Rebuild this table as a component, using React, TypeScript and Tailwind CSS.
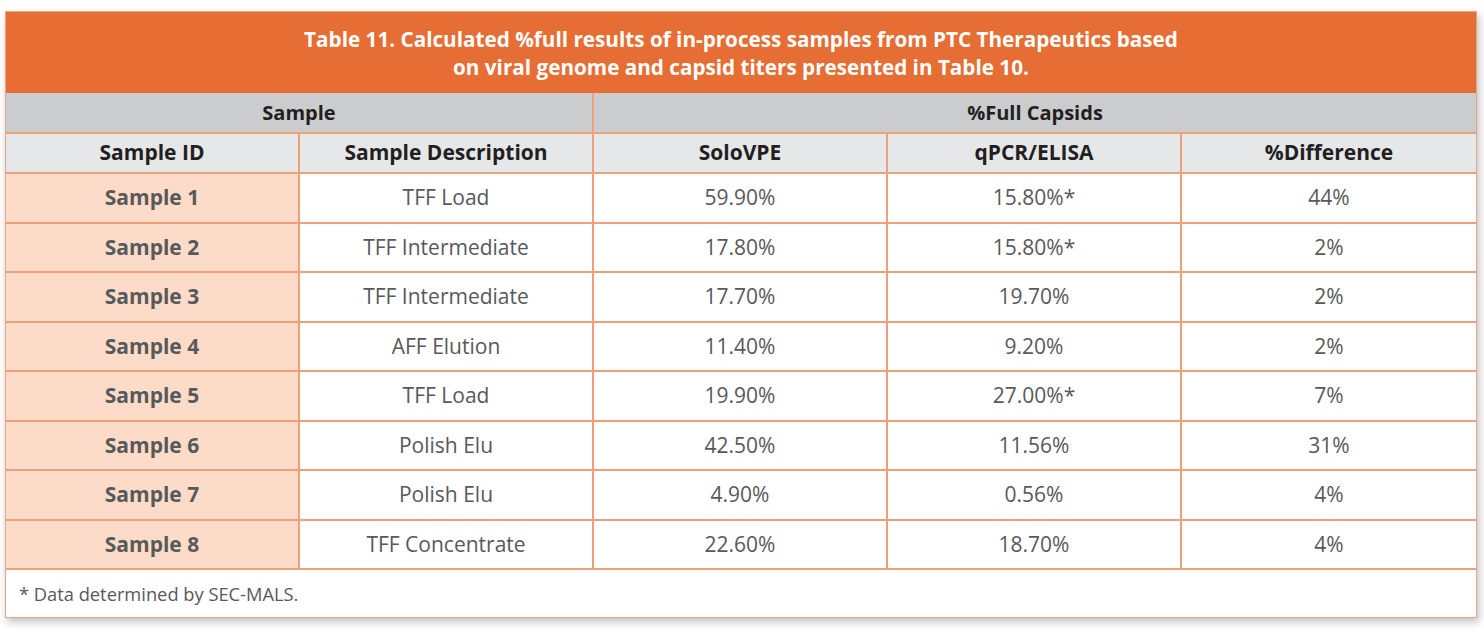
import React from "react";

const rows = [
  { id: "Sample 1", desc: "TFF Load", solo: "59.90%", qpcr: "15.80%*", diff: "44%" },
  { id: "Sample 2", desc: "TFF Intermediate", solo: "17.80%", qpcr: "15.80%*", diff: "2%" },
  { id: "Sample 3", desc: "TFF Intermediate", solo: "17.70%", qpcr: "19.70%", diff: "2%" },
  { id: "Sample 4", desc: "AFF Elution", solo: "11.40%", qpcr: "9.20%", diff: "2%" },
  { id: "Sample 5", desc: "TFF Load", solo: "19.90%", qpcr: "27.00%*", diff: "7%" },
  { id: "Sample 6", desc: "Polish Elu", solo: "42.50%", qpcr: "11.56%", diff: "31%" },
  { id: "Sample 7", desc: "Polish Elu", solo: "4.90%", qpcr: "0.56%", diff: "4%" },
  { id: "Sample 8", desc: "TFF Concentrate", solo: "22.60%", qpcr: "18.70%", diff: "4%" },
];

const headers = ["Sample ID", "Sample Description", "SoloVPE", "qPCR/ELISA", "%Difference"];

export default function App() {
  return (
    <div className="min-h-[632px] w-[1484px] bg-white pl-[5px] pt-[11px] font-['Open_Sans',sans-serif]">
      <div className="w-[1472px] border border-[#e7a585] bg-white shadow-[2px_4px_8px_rgba(0,0,0,0.25)]">
        <div className="flex h-[81px] flex-col items-center justify-center bg-[#e66d33] text-center text-[20.7px] font-bold leading-[28px] text-white">
          <p>Table 11. Calculated %full results of in-process samples from PTC Therapeutics based</p>
          <p>on viral genome and capsid titers presented in Table 10.</p>
        </div>

        <div className="grid grid-cols-[588px_882px] bg-[#cbcccd] text-[20px] font-bold text-[#231f20]">
          <div className="flex h-[39px] items-center justify-center border-r-2 border-[#eea07a]">Sample</div>
          <div className="flex h-[39px] items-center justify-center">%Full Capsids</div>
        </div>

        <div className="grid grid-cols-[repeat(5,294px)] border-t-2 border-[#eea07a] bg-[#e6e7e8] text-[21px] font-bold text-[#231f20]">
          {headers.map((h, i) => (
            <div
              key={h}
              className={`flex h-[38px] items-center justify-center ${i < 4 ? "border-r-2 border-[#eea07a]" : ""}`}
            >
              {h}
            </div>
          ))}
        </div>

        {rows.map((r) => (
          <div
            key={r.id}
            className="grid h-[49.5px] grid-cols-[repeat(5,294px)] border-t-2 border-[#eea07a] text-[21px] text-[#58595b]"
          >
            <div className="flex items-center justify-center border-r-2 border-[#eea07a] bg-[#fcdcc8] font-bold">
              {r.id}
            </div>
            <div className="flex items-center justify-center border-r-2 border-[#eea07a]">{r.desc}</div>
            <div className="flex items-center justify-center border-r-2 border-[#eea07a]">{r.solo}</div>
            <div className="flex items-center justify-center border-r-2 border-[#eea07a]">{r.qpcr}</div>
            <div className="flex items-center justify-center">{r.diff}</div>
          </div>
        ))}

        <div className="flex h-[49px] items-center border-t-2 border-[#eea07a] pl-[13px] text-[18.3px] text-[#58595b]">
          * Data determined by SEC-MALS.
        </div>
      </div>
    </div>
  );
}
